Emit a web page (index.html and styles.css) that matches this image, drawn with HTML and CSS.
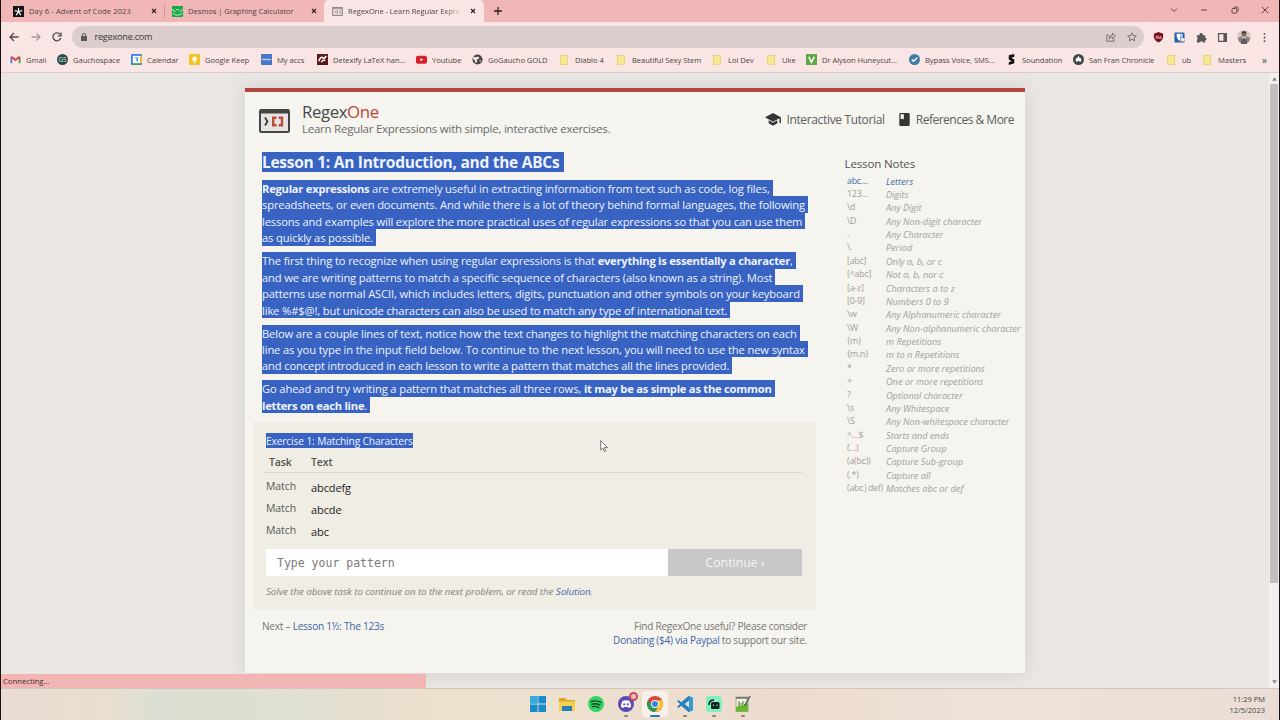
FILE: index.html
```html
<!DOCTYPE html>
<html lang="en">

<head>
   <meta charset="UTF-8">
   <meta name="viewport" content="width=device-width, initial-scale=1.0">
   <title>RegexOne - Learn Regular Expressions</title>
   <link rel="stylesheet" href="styles.css">
</head>

<body>
   <!-- Tab strip -->
   <div class="tabs">
      <div class="tab tab-first">
         <svg class="icon" viewBox="0 0 12 12"><rect width="12" height="12" fill="#151515"/><path d="M6 2v4M2 5l4 1 4-1M6 6l-2.5 4M6 6l2.5 4" stroke="#fff" stroke-width="1.3" fill="none"/></svg>
         <span class="tab-text t1">Day 6 - Advent of Code 2023</span>
         <svg class="close" viewBox="0 0 6 6"><path d="M1 1l4 4M5 1L1 5"/></svg>
      </div>
      <div class="tab tab-second">
         <svg class="icon" viewBox="0 0 12 12"><rect width="12" height="12" rx="1" fill="#18a843"/><path d="M1 3q0 4 3 3M11 3q0 4-3 3M4 3.5q2 2 4 0M1 8q5 4 10 0" stroke="#d9f5df" stroke-width="1" fill="none"/></svg>
         <span class="tab-text">Desmos | Graphing Calculator</span>
         <svg class="close" viewBox="0 0 6 6"><path d="M1 1l4 4M5 1L1 5"/></svg>
      </div>
      <div class="tab tab-active">
         <svg class="icon" viewBox="0 0 12 12"><rect x=".8" y="1.8" width="10.4" height="8.4" fill="none" stroke="#77706f"/><path d="M1 3h10M3 5l1 1.3L3 8M6.5 5H5.5v3h1M8 5h1v3H8" stroke="#77706f" fill="none" stroke-width=".8"/></svg>
         <span class="tab-text fade">RegexOne - Learn Regular Expre</span>
         <svg class="close" viewBox="0 0 6 6"><path d="M1 1l4 4M5 1L1 5"/></svg>
      </div>
      <svg class="plus" viewBox="0 0 8 8"><path d="M4 0v8M0 4h8"/></svg>
      <div class="window-buttons">
         <svg viewBox="0 0 8 8"><path d="M1 2.5l3 3 3-3"/></svg>
         <svg viewBox="0 0 8 8"><path d="M1 4h6"/></svg>
         <svg viewBox="0 0 8 8"><rect x="1" y="2.5" width="4.7" height="4.7" rx="1"/><path d="M2.7 1h3.2q1.2 0 1.2 1.2v3.2"/></svg>
         <svg viewBox="0 0 8 8"><path d="M.8.8l6.4 6.4M7.2.8L.8 7.2"/></svg>
      </div>
   </div>

   <!-- Address bar -->
   <div class="toolbar">
      <svg class="nav" viewBox="0 0 10 10"><path d="M9.5 5H1M5 1L1 5l4 4"/></svg>
      <svg class="nav dim" viewBox="0 0 10 10"><path d="M.5 5H9M5.5 1.5L9 5 5.5 8.5"/></svg>
      <svg class="nav" viewBox="0 0 10 10"><path d="M8.8 6A4 4 0 1 1 8 2.2M9 .5v3.3H5.8"/></svg>
      <div class="omnibox">
         <svg class="lock" viewBox="0 0 6 8"><rect y="3" width="6" height="5" rx=".6" fill="#5b5555"/><path d="M1.4 3.3V2a1.6 1.6 0 0 1 3.2 0v1.3" fill="none" stroke="#5b5555"/></svg>
         <span class="url">regexone.com</span>
         <svg class="box-icon" viewBox="0 0 10 10"><path d="M3 3H.8v6.2h7.4V7M3 7q0-4 3.5-4V1.2L9.6 4 6.5 6.7V5Q4.3 5 3 7z"/></svg>
         <svg class="box-icon" viewBox="0 0 10 10"><path d="M5 .8l1.2 2.8 3.1.3-2.3 2 .7 3L5 7.3l-2.7 1.6.7-3-2.3-2 3.1-.3z"/></svg>
      </div>
      <div class="extensions">
         <svg viewBox="0 0 12 12"><path d="M6 0q3 1.5 5 1.5Q12 9 6 11.5 0 9 1 1.5 3 1.5 6 0z" fill="#7c0d1c"/><path d="M3.5 4v2q0 1 1 1t1-1V4M6.5 5v1a1.2 1.2 0 1 0 1-1.2" stroke="#fff" fill="none" stroke-width=".8"/></svg>
         <svg viewBox="0 0 12 12"><rect x=".5" y=".5" width="11" height="11" rx="1" fill="#2463a8"/><path d="M3 2h4v8Q2 8 3 2z" fill="#fff"/><rect x="7" y="2" width="2.5" height="4" fill="#b9d7f4"/><circle cx="9.5" cy="8.5" r="2.2" fill="#f6e4df"/></svg>
         <svg viewBox="0 0 12 12"><path d="M1 3.5h3a1.7 1.7 0 1 1 3.2 0H10v2.7a1.5 1.5 0 0 1 0 3V11.5H7.5a1.5 1.5 0 0 0-3 0H1V8.5a1.5 1.5 0 0 0 0-2.7z" fill="#5a5655"/></svg>
         <svg viewBox="0 0 12 12"><path d="M1.7 1.7h8.6v8.6H1.7z" fill="none" stroke="#5a5655" stroke-width="1.3"/><path d="M7 2h3v8H7z" fill="#5a5655"/></svg>
         <svg class="avatar" viewBox="0 0 14 14"><circle cx="7" cy="7" r="7" fill="#d2c9c5"/><path d="M1 8l4-2v7.5Q1 12 1 8zM13 8L9 6v7.5q4-1.5 4-5.5z" fill="#8b8683"/><circle cx="7" cy="4.5" r="2.3" fill="#8f6657"/><path d="M4.5 4q0-3 2.5-3t2.5 3L7 3z" fill="#443b3a"/><path d="M4 14q-.5-6 3-6t3 6z" fill="#625d63"/></svg>
         <svg viewBox="0 0 12 12"><g fill="#4b4747"><circle cx="6" cy="2" r="1"/><circle cx="6" cy="6" r="1"/><circle cx="6" cy="10" r="1"/></g></svg>
      </div>
   </div>

   <!-- Bookmarks -->
   <div class="bookmarks">
      <span><svg viewBox="0 0 12 12"><path d="M1.5 10V3" stroke="#4a7fdc" stroke-width="2"/><path d="M10.5 10V3" stroke="#3e9d55" stroke-width="2"/><path d="M1.5 3L6 6.5 10.5 3" stroke="#d6453b" stroke-width="2.2" fill="none"/></svg>Gmail</span>
      <span><svg viewBox="0 0 12 12"><circle cx="6" cy="6" r="6" fill="#294b4a"/><text x="6" y="8.5" class="gs">GS</text></svg>Gauchospace</span>
      <span><svg viewBox="0 0 12 12"><rect width="12" height="12" rx="1" fill="#3c7ee8"/><path d="M10 2h2v8h-2z" fill="#f4bd20"/><path d="M2 10h8v2H2z" fill="#36a853"/><path d="M2 2h8v8H2z" fill="#fff"/><path d="M4.5 4h2v4M7 4v4" stroke="#3c7ee8" fill="none"/></svg>Calendar</span>
      <span><svg viewBox="0 0 12 12"><rect width="12" height="12" rx="1" fill="#f1c422"/><circle cx="6" cy="5.5" r="2.7" fill="#fffbe9"/><path d="M5 8h2v2H5z" fill="#fffbe9"/></svg>Google Keep</span>
      <span><svg viewBox="0 0 12 12"><rect width="12" height="12" fill="#4a76cc"/><path d="M1 6h10" stroke="#bdcff2" stroke-width="1.5"/></svg>My accs</span>
      <span><svg viewBox="0 0 12 12"><rect width="12" height="12" fill="#5c171b"/><path d="M2 8q2-6 4-4t4-2M5 9q1-3 4-2" stroke="#fff" stroke-width="1.7" fill="none"/></svg>Detexify LaTeX han...</span>
      <span><svg viewBox="0 0 12 12"><rect y="2" width="12" height="8.5" rx="2" fill="#d5202b"/><path d="M4.8 4.5l3.2 1.7-3.2 1.7z" fill="#fff"/></svg>Youtube</span>
      <span><svg viewBox="0 0 12 12"><circle cx="6" cy="6" r="5.5" fill="#4a4747"/><path d="M2 3q3 1 4 0t2 2l-3 1 1 2-2 2-1-3-2-2zM8 7l2 0-1 2z" fill="#f7e6e4"/></svg>GoGaucho GOLD</span>
      <span><i class="folder"></i>Diablo 4</span>
      <span><i class="folder"></i>Beautiful Sexy Stem</span>
      <span><i class="folder"></i>Lol Dev</span>
      <span><i class="folder"></i>Uke</span>
      <span><svg viewBox="0 0 12 12"><rect width="12" height="12" fill="#62a744"/><path d="M3 3l3 6 3-6" stroke="#fff" stroke-width="1.8" fill="none"/></svg>Dr Alyson Huneycut...</span>
      <span><svg viewBox="0 0 12 12"><circle cx="6" cy="6" r="6" fill="#417aa6"/><path d="M3 6l2 2 4-4" stroke="#fff" stroke-width="1.5" fill="none"/></svg>Bypass Voice, SMS...</span>
      <span><svg viewBox="0 0 12 12"><path d="M3.5 1L9 0v3L6 4l3 2v4l-6 2V9l3-1-3-2V2z" fill="#111"/></svg>Soundation</span>
      <span><svg viewBox="0 0 12 12"><circle cx="6" cy="6" r="6" fill="#3a4948"/><path d="M6 2l1.5 2.5H9v3L7.5 9 7 7.5H5L4.5 9 3 7.5v-3h1.5z" fill="#fff"/></svg>San Fran Chronicle</span>
      <span><i class="folder"></i>ub</span>
      <span><i class="folder"></i>Masters</span>
      <span class="more">»</span>
   </div>

   <div class="viewport">
      <div class="page">
         <div class="header">
            <svg class="logo" viewBox="0 0 31 25"><rect x="1" y="2" width="29" height="22" rx="1.5" fill="#e6e4e2" stroke="#454545" stroke-width="2"/><path d="M1 1.5h29v4H1z" fill="#454545"/><path d="M6 9.5l2.5 4L6 17.5" fill="none" stroke="#333" stroke-width="1.7"/><path d="M17.5 9.7h-3.3v7.6h3.3M19.7 9.7H23v7.6h-3.3" fill="none" stroke="#bd4c35" stroke-width="2.4"/></svg>
            <div class="brand">
               <div class="brand-name">Regex<b>One</b></div>
               <div class="tagline">Learn Regular Expressions with simple, interactive exercises.</div>
            </div>
            <div class="menu">
               <svg class="cap" viewBox="0 0 22 18"><path d="M5 10.2v4l6 3.3 6-3.3v-4l-6 3.3zM11 0L0 6l11 6 9-4.9V14h2V6z"/></svg>
               <span>Interactive Tutorial</span>
               <svg class="book" viewBox="0 0 16 20"><path fill-rule="evenodd" d="M2 0h12a2 2 0 0 1 2 2v16a2 2 0 0 1-2 2H2a2 2 0 0 1-2-2V2a2 2 0 0 1 2-2zm0 2v8l2.5-1.5L7 10V2z"/></svg>
               <span class="references">References &amp; More</span>
            </div>
         </div>

         <div class="content">
            <div class="lesson">
               <h2><mark>Lesson 1: An Introduction, and the ABCs</mark></h2>
               <p>
                  <mark><b>Regular expressions</b> are extremely useful in extracting information from text such as code, log files,</mark>
                  <mark>spreadsheets, or even documents. And while there is a lot of theory behind formal languages, the following</mark>
                  <mark>lessons and examples will explore the more practical uses of regular expressions so that you can use them</mark>
                  <mark>as quickly as possible.</mark>
               </p>
               <p>
                  <mark>The first thing to recognize when using regular expressions is that <b>everything is essentially a character</b>,</mark>
                  <mark>and we are writing patterns to match a specific sequence of characters (also known as a string). Most</mark>
                  <mark>patterns use normal ASCII, which includes letters, digits, punctuation and other symbols on your keyboard</mark>
                  <mark>like %#$@!, but unicode characters can also be used to match any type of international text.</mark>
               </p>
               <p>
                  <mark>Below are a couple lines of text, notice how the text changes to highlight the matching characters on each</mark>
                  <mark>line as you type in the input field below. To continue to the next lesson, you will need to use the new syntax</mark>
                  <mark>and concept introduced in each lesson to write a pattern that matches all the lines provided.</mark>
               </p>
               <p>
                  <mark>Go ahead and try writing a pattern that matches all three rows, <b>it may be as simple as the common</b></mark>
                  <mark><b>letters on each line</b>.</mark>
               </p>

               <div class="exercise">
                  <mark class="exercise-title">Exercise 1: Matching Characters</mark>
                  <div class="row row-head"><span>Task</span><span>Text</span></div>
                  <div class="row"><span>Match</span><span class="sample">abcdefg</span></div>
                  <div class="row"><span>Match</span><span class="sample">abcde</span></div>
                  <div class="row"><span>Match</span><span class="sample">abc</span></div>
                  <div class="pattern">
                     <input type="text" placeholder="Type your pattern">
                     <button>Continue ›</button>
                  </div>
                  <div class="hint">Solve the above task to continue on to the next problem, or read the <a>Solution</a>.</div>
               </div>

               <div class="footer">
                  <div class="next">Next – <a>Lesson 1½: The 123s</a></div>
                  <div class="donate">Find RegexOne useful? Please consider<br><a>Donating ($4) via Paypal</a> to support our site.</div>
               </div>
            </div>

            <div class="notes">
               <h3>Lesson Notes</h3>
               <dl>
                  <dt class="current">abc…</dt><dd class="current">Letters</dd>
                  <dt>123…</dt><dd>Digits</dd>
                  <dt>\d</dt><dd>Any Digit</dd>
                  <dt>\D</dt><dd>Any Non-digit character</dd>
                  <dt>.</dt><dd>Any Character</dd>
                  <dt>\.</dt><dd>Period</dd>
                  <dt>[abc]</dt><dd>Only a, b, or c</dd>
                  <dt>[^abc]</dt><dd>Not a, b, nor c</dd>
                  <dt>[a-z]</dt><dd>Characters a to z</dd>
                  <dt>[0-9]</dt><dd>Numbers 0 to 9</dd>
                  <dt>\w</dt><dd>Any Alphanumeric character</dd>
                  <dt>\W</dt><dd>Any Non-alphanumeric character</dd>
                  <dt>{m}</dt><dd>m Repetitions</dd>
                  <dt>{m,n}</dt><dd>m to n Repetitions</dd>
                  <dt>*</dt><dd>Zero or more repetitions</dd>
                  <dt>+</dt><dd>One or more repetitions</dd>
                  <dt>?</dt><dd>Optional character</dd>
                  <dt>\s</dt><dd>Any Whitespace</dd>
                  <dt>\S</dt><dd>Any Non-whitespace character</dd>
                  <dt>^…$</dt><dd>Starts and ends</dd>
                  <dt>(…)</dt><dd>Capture Group</dd>
                  <dt>(a(bc))</dt><dd>Capture Sub-group</dd>
                  <dt>(.*)</dt><dd>Capture all</dd>
                  <dt>(abc|def)</dt><dd>Matches abc or def</dd>
               </dl>
            </div>
         </div>
      </div>

      <div class="scrollbar">
         <svg viewBox="0 0 6 4"><path d="M0 4l3-4 3 4z"/></svg>
         <div class="thumb"></div>
         <svg viewBox="0 0 6 4"><path d="M0 0l3 4 3-4z"/></svg>
      </div>
      <div class="status">Connecting...</div>
      <svg class="cursor" viewBox="0 0 8 13"><path d="M.7 1v9.5l2.2-2 1.5 3.6 1.5-.7-1.5-3.4h3z" fill="#fff" stroke="#6b6b6b" stroke-width=".9"/></svg>
   </div>

   <!-- Taskbar -->
   <div class="taskbar">
      <div class="apps">
         <div class="app"><svg viewBox="0 0 16 16"><path d="M0 0h7.6v7.6H0zM8.4 0H16v7.6H8.4zM0 8.4h7.6V16H0zM8.4 8.4H16V16H8.4z" fill="#178bcb"/><path d="M0 0h7.6v7.6H0z" fill="#38ace0"/></svg></div>
         <div class="app"><svg viewBox="0 0 16 16"><path d="M0 2h6l2 2h8v11H0z" fill="#dba42c"/><path d="M0 5.5h16V15H0z" fill="#f6cf4e"/><path d="M3 10h10v5H3z" fill="#237fb8"/></svg></div>
         <div class="app"><svg viewBox="0 0 16 16"><circle cx="8" cy="8" r="8" fill="#30d565"/><path d="M3.3 5.5q5-1.5 9.5.9M3.8 8.2q4.5-1.2 8 .8M4.3 10.7q3.5-1 6.5.8" stroke="#173a22" stroke-width="1.4" stroke-linecap="round" fill="none"/></svg></div>
         <div class="app open"><svg viewBox="0 0 16 16"><circle cx="8" cy="8" r="8" fill="#5b4bb6"/><path d="M4.5 5Q8 3.5 11.5 5q1.8 3 1.5 6l-2.3 1L10 11H6l-.7 1L3 11q-.3-3 1.5-6z" fill="#fff"/><circle cx="6.2" cy="8.3" r="1.1" fill="#5b4bb6"/><circle cx="9.8" cy="8.3" r="1.1" fill="#5b4bb6"/></svg><i class="badge"></i></div>
         <div class="app open active"><svg viewBox="0 0 16 16"><circle cx="8" cy="8" r="8" fill="#dc4437"/><path d="M1.1 4A8 8 0 0 0 8 16l4-6.5H5z" fill="#269c55"/><path d="M15 4.2A8 8 0 0 1 8 16l3.5-6L11 4.2z" fill="#f5c52c"/><circle cx="8" cy="8" r="4" fill="#fff"/><circle cx="8" cy="8" r="3" fill="#3d82de"/></svg></div>
         <div class="app open"><svg viewBox="0 0 16 16"><path d="M11.5 0L16 2v12l-4.5 2L4.3 9.8 1.5 12 0 11l3-3-3-3 1.5-1 2.8 2.2zM12 4.5L7.5 8l4.5 3.5z" fill="#2480bd" fill-rule="evenodd"/><path d="M12 0l4 2v12l-4 2z" fill="#319ad8"/></svg></div>
         <div class="app open"><svg viewBox="0 0 16 16"><rect width="16" height="16" rx="3.5" fill="#7ff0c3"/><rect x="5" y="6" width="8.5" height="7" rx="1.5" fill="#14211d"/><path d="M3 9q0-5 5-5" stroke="#14211d" stroke-width="1.7" fill="none"/><path d="M7.5 8.5v1.5M11 8.5v1.5" stroke="#7ff0c3"/></svg></div>
         <div class="app open"><svg viewBox="0 0 16 16"><path d="M1 1h12v14.5H1z" fill="#eef0e2" stroke="#8b9180" stroke-width=".7"/><path d="M1 1h12v1.8H1z" fill="#777b77"/><path d="M1 11l12-4v8.5H1z" fill="#68b82d"/><path d="M4 5v6M4 8h4V5" stroke="#5a8434" fill="none"/><path d="M15 0L9.5 10" stroke="#565856" stroke-width="1.5"/></svg></div>
      </div>
      <div class="clock">11:29 PM<br>12/5/2023</div>
   </div>
</body>

</html>
```
FILE: styles.css
```css
* {
   box-sizing: border-box;
}

body {
   display: flex;
   flex-direction: column;
   width: 1280px;
   height: 720px;
   margin: 0;
   overflow: hidden;
   border-left: 1px solid #161112;
   border-right: 1px solid #161112;
   font-family: 'Open Sans', 'Noto Sans', sans-serif;
   background-color: #f9e6e4;
   color: #4c4444;
}

svg {
   display: block;
   flex: none;
}

/* Tab strip */
.tabs {
   display: flex;
   align-items: center;
   height: 22px;
   flex: none;
   background-color: #f1b7b6;
}

.tab {
   display: flex;
   align-items: center;
   height: 22px;
   font-size: 7.6px;
   white-space: nowrap;
}

.tab-first {
   width: 164px;
   height: 14px;
   padding: 0 7px 0 12px;
   border-right: 1px solid #cf9998;
}

.tab-second {
   width: 159px;
   padding: 0 7px;
}

.tab-active {
   width: 160px;
   padding: 0 8px;
   background-color: #f9e6e4;
   border-radius: 5px 5px 0 0;
}

.tab .icon {
   width: 11px;
   height: 11px;
   margin-right: 5px;
}

.tab-text {
   flex: 1;
   overflow: hidden;
   letter-spacing: -0.06px;
}

.t1 {
   letter-spacing: 0.08px;
}

.fade {
   margin-right: 8px;
   -webkit-mask-image: linear-gradient(90deg, #000 85%, transparent);
   mask-image: linear-gradient(90deg, #000 85%, transparent);
}

.close {
   width: 6px;
   height: 6px;
   stroke: #2a2020;
   stroke-width: 1.1;
}

.plus {
   width: 8px;
   height: 8px;
   margin-left: 10px;
   stroke: #2a2020;
   stroke-width: 1.3;
}

.window-buttons {
   display: flex;
   gap: 22.5px;
   margin: -3px 10px 0 auto;
}

.window-buttons svg {
   width: 8px;
   height: 8px;
   fill: none;
   stroke: #54393a;
   stroke-width: 0.9;
}

/* Address bar */
.toolbar {
   display: flex;
   align-items: center;
   height: 26px;
   flex: none;
   padding: 4px 0 0 8px;
}

.nav {
   width: 10px;
   height: 10px;
   margin-right: 11.5px;
   fill: none;
   stroke: #4f4949;
   stroke-width: 1.3;
}

.nav.dim {
   stroke: #a69b9a;
}

.omnibox {
   display: flex;
   align-items: center;
   width: 1072px;
   height: 22px;
   margin-left: -2px;
   padding: 0 7px 0 9px;
   border-radius: 11px;
   background-color: #dacdcc;
}

.lock {
   width: 6px;
   height: 8px;
   margin-right: 8px;
}

.url {
   flex: 1;
   margin-top: -1px;
   font-size: 9.2px;
   line-height: 20px;
   letter-spacing: -0.27px;
   color: #413b3b;
}

.box-icon {
   width: 10px;
   height: 10px;
   margin-left: 11px;
   fill: none;
   stroke: #6e6767;
   stroke-width: 0.9;
}

.extensions {
   display: flex;
   align-items: center;
   gap: 10.5px;
   margin-left: 9px;
}

.extensions svg {
   width: 11px;
   height: 11px;
}

.extensions .avatar {
   width: 14px;
   height: 14px;
   margin: 0 -2px;
}

/* Bookmarks */
.bookmarks {
   display: grid;
   grid-template-columns: 47px 74px 58px 72px 56px 99px 56px 87px 57px 96px 54px 40px 103px 97px 67px 93px 36px 60px 14px;
   align-items: center;
   height: 25px;
   flex: none;
   padding: 0 0 1px 9px;
   border-bottom: 1px solid #d8cecd;
   font-size: 7.6px;
   letter-spacing: -0.05px;
   white-space: nowrap;
}

.bookmarks span {
   display: flex;
   align-items: center;
   gap: 5px;
}

.bookmarks svg {
   width: 11px;
   height: 11px;
}

.bookmarks .more {
   font-size: 10px;
}

.gs {
   font-size: 7px;
   fill: #d5e2df;
   text-anchor: middle;
}

.folder {
   width: 8px;
   height: 10px;
   margin: 0 2px 0 1px;
   background-color: #f6e793;
   border: 1px solid #ead574;
}

/* Page */
.viewport {
   position: relative;
   flex: 1;
   padding-top: 15px;
   background-color: #eae6e4;
}

.page {
   width: 780px;
   height: 585px;
   margin-left: 244px;
   background-color: #f5f4ef;
   border-top: 4px solid #b3473f;
   box-shadow: 0 0 18px rgba(0, 0, 0, 0.1);
}

.header {
   display: flex;
   height: 56px;
   padding: 10px 11px 0 14px;
}

.logo {
   width: 31px;
   height: 25px;
   margin: 6px 12px 0 0;
}

.brand {
   flex: 1;
   white-space: nowrap;
}

.brand-name {
   font-size: 16.8px;
   line-height: 20px;
   letter-spacing: -0.4px;
   color: #484848;
}

.brand-name b {
   font-weight: 500;
   color: #b94636;
}

.tagline {
   font-size: 11.5px;
   line-height: 14px;
   letter-spacing: -0.25px;
   color: #6b6b6b;
}

.menu {
   display: flex;
   align-items: center;
   height: 34px;
   font-size: 12px;
   letter-spacing: -0.35px;
   color: #5d5d5d;
   white-space: nowrap;
}

.menu svg {
   fill: #353535;
}

.references {
   letter-spacing: -0.5px;
}

.cap {
   width: 16px;
   height: 13px;
   margin-right: 5px;
}

.book {
   width: 11px;
   height: 13px;
   margin: 0 6px 0 14px;
}

.content {
   display: flex;
}

.lesson {
   width: 600px;
   padding-left: 17px;
}

/* Selected text, one block for each line */
mark {
   display: block;
   width: fit-content;
   padding-right: 3px;
   background-color: #3863c2;
   color: #eef3ff;
   white-space: nowrap;
}

h2 {
   height: 20px;
   margin: 4px 0 8px;
   font-size: 15.5px;
   font-weight: 700;
   letter-spacing: -0.27px;
   line-height: 20px;
}

h2 mark {
   padding-right: 5px;
}

p {
   margin: 0 0 6.5px;
   font-size: 11.2px;
   letter-spacing: -0.135px;
   line-height: 17.6px;
}

p mark {
   height: 16.45px;
}

p b {
   letter-spacing: -0.25px;
}

.exercise {
   width: 563px;
   height: 187px;
   margin: 9px 0 0 -9px;
   padding: 11px 14px 0 13px;
   background-color: #efede4;
   color: #5a5a56;
}

.exercise-title {
   height: 15px;
   padding: 0;
   font-size: 10.2px;
   letter-spacing: -0.13px;
   line-height: 17px;
}

.row {
   display: grid;
   grid-template-columns: 45px 1fr;
   align-items: center;
   height: 22px;
   font-size: 10.5px;
   letter-spacing: -0.1px;
}

.row-head {
   height: 25px;
   margin: 0 0 2px -2px;
   padding: 4px 0 0 2px;
   border-bottom: 1px solid #d9d7ce;
   font-weight: 600;
   color: #54544f;
}

.row-head span:first-child {
   padding-left: 3px;
}

.sample {
   padding-top: 2px;
   font-size: 11px;
   color: #1d1d1d;
}

.pattern {
   display: flex;
   height: 27px;
   margin-top: 8px;
}

.pattern input {
   width: 402px;
   padding: 0 11px;
   border: none;
   font-family: 'DejaVu Sans Mono', monospace;
   font-size: 11.5px;
   background-color: #fff;
}

.pattern input::placeholder {
   color: #7a7a7a;
}

.pattern button {
   flex: 1;
   padding: 0;
   border: none;
   font-family: inherit;
   font-size: 12.3px;
   background-color: #c8c8c8;
   color: #f4f4f4;
}

.hint {
   margin-top: 9px;
   font-size: 9.8px;
   letter-spacing: -0.09px;
   line-height: 14px;
   font-style: italic;
   color: #84847e;
   white-space: nowrap;
}

a {
   color: #4166a8;
}

.footer {
   display: flex;
   justify-content: space-between;
   width: 545px;
   margin-top: 10px;
   font-size: 10.1px;
   letter-spacing: -0.26px;
   line-height: 14px;
   color: #777773;
}

.donate {
   text-align: right;
}

.notes {
   flex: 1;
   white-space: nowrap;
}

.notes h3 {
   margin: 8px 0 2.6px -0.5px;
   font-size: 11.6px;
   font-weight: 400;
   letter-spacing: -0.17px;
   line-height: 16px;
   color: #555;
}

dl {
   display: grid;
   grid-template-columns: 39px 1fr;
   grid-auto-rows: 13.39px;
   margin: 0 0 0 2px;
   font-size: 8.8px;
   line-height: 13.39px;
   color: #a0a09b;
}

dt {
   letter-spacing: -0.2px;
}

dd {
   margin: 0;
   font-size: 9.2px;
   font-style: italic;
}

.current {
   color: #3d6dac;
}

/* Things lying over the page */
.scrollbar {
   position: absolute;
   top: 0;
   right: 0;
   bottom: 0;
   display: flex;
   flex-direction: column;
   align-items: center;
   width: 10px;
   padding: 4px 0;
   background-color: #f2f0ef;
}

.scrollbar svg {
   width: 5px;
   height: 4px;
   fill: #8b8786;
}

.thumb {
   width: 8px;
   height: 499px;
   margin: 3px 0 auto;
   background-color: #c2bfbe;
}

.status {
   position: absolute;
   left: 0;
   bottom: 0;
   width: 425px;
   height: 14px;
   padding-left: 2px;
   background-color: #f1b5b4;
   font-size: 7.7px;
   line-height: 15px;
   color: #4d2b2b;
}

.cursor {
   position: absolute;
   left: 599px;
   top: 366px;
   width: 8px;
   height: 14px;
}

/* Taskbar */
.taskbar {
   position: relative;
   display: flex;
   justify-content: center;
   height: 32px;
   flex: none;
   border-top: 1px solid #d6c5bc;
   background: linear-gradient(90deg, #e8dcd4 0%, #eadfcd 8%, #dcdfd3 12%, #dfdfd2 23%, #ede0cc 34%, #eee1d0 42%, #ecdccd 60%, #eee2d8 80%, #e9ddd5 100%);
}

.apps {
   display: flex;
   align-items: center;
   gap: 3.4px;
   margin-left: 1px;
   padding-bottom: 1px;
}

.app {
   position: relative;
   display: flex;
   align-items: center;
   justify-content: center;
   width: 26px;
   height: 26px;
   border-radius: 3px;
}

.app svg {
   width: 16px;
   height: 16px;
}

.app.active {
   background-color: #f7f0eb;
}

.app.open::after {
   content: '';
   position: absolute;
   bottom: 0;
   left: 11px;
   width: 4px;
   height: 2px;
   border-radius: 1px;
   background-color: #8d7f7c;
}

.app.active::after {
   left: 8px;
   width: 10px;
   background-color: #2875a8;
}

.badge {
   position: absolute;
   top: 1px;
   right: 1px;
   width: 9px;
   height: 9px;
   border: 2.5px solid #cc4858;
   border-radius: 50%;
   background-color: #e6c3c3;
}

.clock {
   position: absolute;
   right: 14px;
   top: 5px;
   font-size: 7.5px;
   line-height: 10.5px;
   text-align: right;
}
```
